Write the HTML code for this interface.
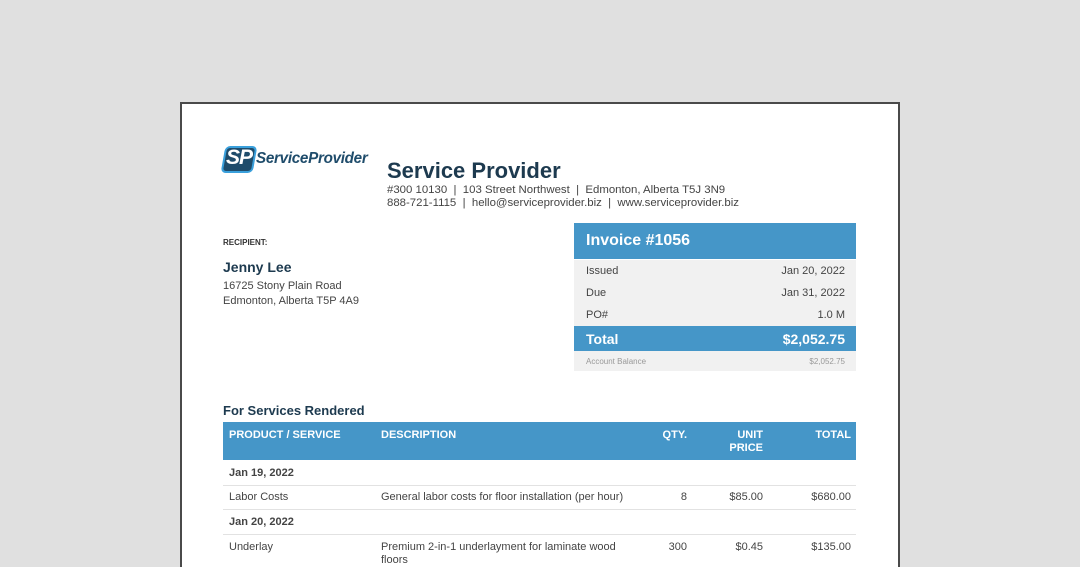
<!DOCTYPE html>
<html><head><meta charset="utf-8"><style>
html,body{margin:0;width:1080px;height:567px;overflow:hidden}
body{background:#e0e0e0;font-family:"Liberation Sans",Arial,sans-serif;position:relative}
.paper{position:absolute;left:180px;top:102px;width:716px;height:470px;background:#fff;border:2px solid #4a4a4a;border-bottom:none}
.a{position:absolute;white-space:nowrap}
.g{color:#444;font-size:11px}
.blue{background:#4596c8;color:#fff}
.hr{position:absolute;left:223px;width:633px;height:1px;background:#e2e2e2}
.td{position:absolute;font-size:11px;color:#444}
</style></head><body>
<div class="paper"></div>
<!-- logo -->
<div class="a" style="left:223px;top:146px;width:28px;height:23px;border:2px solid #3aa0dc;border-radius:5px;background:#1f4c6b;transform:skewX(-10deg)"></div>
<div class="a" style="left:226px;top:146px;font-size:21px;font-weight:bold;font-style:italic;color:#fff;letter-spacing:-1px">SP</div>
<div class="a" style="left:256px;top:150px;font-size:16px;font-weight:bold;font-style:italic;color:#1f4c6b;letter-spacing:-0.3px;transform:scaleX(0.95);transform-origin:left">ServiceProvider</div>
<div class="a" style="left:387px;top:158px;font-size:22px;font-weight:bold;color:#1d3a4f">Service Provider</div>
<div class="a g" style="left:387px;top:184px;font-size:11.4px">#300 10130 &nbsp;| &nbsp;103 Street Northwest &nbsp;| &nbsp;Edmonton, Alberta T5J 3N9</div>
<div class="a g" style="left:387px;top:197px;font-size:11.4px">888-721-1115 &nbsp;| &nbsp;hello@serviceprovider.biz &nbsp;| &nbsp;www.serviceprovider.biz</div>
<div class="a" style="left:223px;top:238px;font-size:8px;font-weight:bold;color:#333">RECIPIENT:</div>
<div class="a" style="left:223px;top:259px;font-size:14px;font-weight:bold;color:#1d3a4f">Jenny Lee</div>
<div class="a g" style="left:223px;top:280px">16725 Stony Plain Road</div>
<div class="a g" style="left:223px;top:295px">Edmonton, Alberta T5P 4A9</div>
<!-- invoice box -->
<div class="a blue" style="left:574px;top:223px;width:282px;height:36px"></div>
<div class="a" style="left:586px;top:232px;font-size:16px;font-weight:bold;color:#fff">Invoice #1056</div>
<div class="a" style="left:574px;top:260px;width:282px;height:66px;background:#f1f1f1"></div>
<div class="a g" style="left:586px;top:265px">Issued</div><div class="a g" style="right:235px;top:265px">Jan 20, 2022</div>
<div class="a g" style="left:586px;top:287px">Due</div><div class="a g" style="right:235px;top:287px">Jan 31, 2022</div>
<div class="a g" style="left:586px;top:309px">PO#</div><div class="a g" style="right:235px;top:309px">1.0 M</div>
<div class="a blue" style="left:574px;top:326px;width:282px;height:25px"></div>
<div class="a" style="left:586px;top:331px;font-size:14px;font-weight:bold;color:#fff">Total</div>
<div class="a" style="right:235px;top:331px;font-size:14px;font-weight:bold;color:#fff">$2,052.75</div>
<div class="a" style="left:574px;top:351px;width:282px;height:20px;background:#f1f1f1"></div>
<div class="a" style="left:586px;top:357px;font-size:8px;color:#999">Account Balance</div>
<div class="a" style="right:235px;top:357px;font-size:8px;color:#999">$2,052.75</div>
<!-- table -->
<div class="a" style="left:223px;top:403px;font-size:13px;font-weight:bold;color:#1d3a4f">For Services Rendered</div>
<div class="a blue" style="left:223px;top:422px;width:633px;height:38px"></div>
<div class="a" style="left:229px;top:429px;font-size:11px;font-weight:bold;color:#fff">PRODUCT / SERVICE</div>
<div class="a" style="left:381px;top:429px;font-size:11px;font-weight:bold;color:#fff">DESCRIPTION</div>
<div class="a" style="right:393px;top:429px;font-size:11px;font-weight:bold;color:#fff">QTY.</div>
<div class="a" style="right:317px;top:429px;font-size:11px;font-weight:bold;color:#fff;text-align:right;line-height:13px">UNIT<br>PRICE</div>
<div class="a" style="right:229px;top:429px;font-size:11px;font-weight:bold;color:#fff">TOTAL</div>
<div class="td" style="left:229px;top:467px;font-weight:bold">Jan 19, 2022</div>
<div class="hr" style="top:485px"></div>
<div class="td" style="left:229px;top:491px">Labor Costs</div>
<div class="td" style="left:381px;top:491px">General labor costs for floor installation (per hour)</div>
<div class="td" style="right:393px;top:491px">8</div>
<div class="td" style="right:317px;top:491px">$85.00</div>
<div class="td" style="right:229px;top:491px">$680.00</div>
<div class="hr" style="top:509px"></div>
<div class="td" style="left:229px;top:516px;font-weight:bold">Jan 20, 2022</div>
<div class="hr" style="top:534px"></div>
<div class="td" style="left:229px;top:541px">Underlay</div>
<div class="td" style="left:381px;top:541px;line-height:13px">Premium 2-in-1 underlayment for laminate wood<br>floors</div>
<div class="td" style="right:393px;top:541px">300</div>
<div class="td" style="right:317px;top:541px">$0.45</div>
<div class="td" style="right:229px;top:541px">$135.00</div>
</body></html>
